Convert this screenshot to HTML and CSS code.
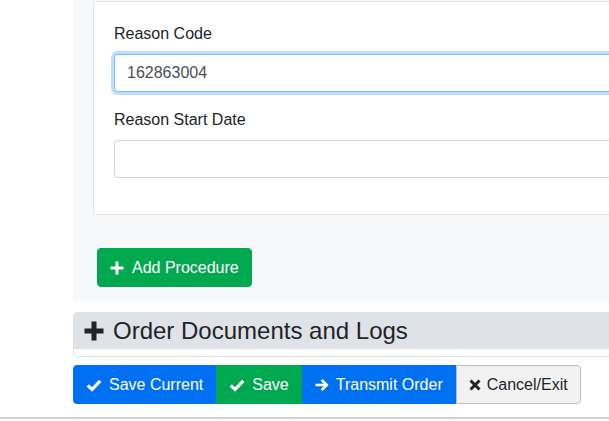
FILE: index.html
```html
<!DOCTYPE html>
<html lang="en">
<head>
<meta charset="utf-8">
<title>Order</title>
<link rel="stylesheet" href="styles.css">
</head>
<body>
<div class="page">
  <div class="main">
    <section class="panel">
      <div class="card">
        <div class="form-group">
          <label class="label">Reason Code</label>
          <input class="input focused" type="text" value="162863004">
        </div>
        <div class="form-group">
          <label class="label">Reason Start Date</label>
          <input class="input" type="text" value="">
        </div>
      </div>
      <button class="btn btn-success add-btn">
        <svg class="ico ico-plus" viewBox="0 0 14 14"><path d="M7 0.5v13M0.5 7h13" stroke="#fff" stroke-width="3" fill="none"/></svg>
        <span>Add Procedure</span>
      </button>
    </section>

    <section class="docs">
      <div class="docs-header">
        <svg class="big-plus" viewBox="0 0 20 20"><path d="M10 0.5v19M0.5 10h19" stroke="#212529" stroke-width="5" fill="none"/></svg>
        <span>Order Documents and Logs</span>
      </div>
      <div class="docs-body"></div>
    </section>

    <div class="actions">
      <button class="btn btn-primary first">
        <svg class="ico ico-check" viewBox="0 0 16 16"><path d="M1.8 8.3l4.2 4.2 8.2-8.7" stroke="#fff" stroke-width="3.2" fill="none" stroke-linejoin="miter"/></svg>
        <span>Save Current</span>
      </button>
      <button class="btn btn-success">
        <svg class="ico ico-check" viewBox="0 0 16 16"><path d="M1.8 8.3l4.2 4.2 8.2-8.7" stroke="#fff" stroke-width="3.2" fill="none" stroke-linejoin="miter"/></svg>
        <span>Save</span>
      </button>
      <button class="btn btn-primary">
        <svg class="ico ico-arrow" viewBox="0 0 14 14"><path d="M0.5 7h11.5M6.6 1.8l5.2 5.2-5.2 5.2" stroke="#fff" stroke-width="2.6" fill="none"/></svg>
        <span>Transmit Order</span>
      </button>
      <button class="btn btn-light last">
        <svg class="ico ico-times" viewBox="0 0 12 12"><path d="M1.5 1.5l9 9M10.5 1.5l-9 9" stroke="#212529" stroke-width="3" fill="none"/></svg>
        <span>Cancel/Exit</span>
      </button>
    </div>
  </div>
  <div class="footer-line"></div>
</div>
</body>
</html>
```

FILE: styles.css
```css
html, body {
  margin: 0;
  padding: 0;
  background: #fff;
  overflow: hidden;
}
body {
  font-family: "Liberation Sans", Arial, sans-serif;
  font-size: 16px;
  line-height: 1.5;
  color: #212529;
}
.page {
  width: 609px;
  height: 421px;
  overflow: hidden;
}
.main {
  margin-left: 73px;
  width: 700px;
}
.panel {
  background: #f7f8fa;
  padding: 1px 0 14px 20px;
}
.card {
  background: #fff;
  border: 1px solid #dfe2e6;
  border-radius: 4px;
  padding: 20px;
}
.form-group {
  margin-bottom: 16px;
}
.label {
  display: block;
  margin-bottom: 8px;
}
.input {
  display: block;
  box-sizing: border-box;
  width: 100%;
  height: 38px;
  padding: 6px 12px;
  font-family: inherit;
  font-size: 16px;
  line-height: 24px;
  color: #495057;
  background: #fff;
  border: 1px solid #ced4da;
  border-radius: 4px;
  outline: none;
}
.input.focused {
  border-color: #80bdff;
  box-shadow: 0 0 0 3px rgba(0, 123, 255, 0.25);
}
.btn {
  display: inline-flex;
  align-items: center;
  box-sizing: border-box;
  height: 39px;
  padding: 6px 12px;
  font-family: inherit;
  font-size: 16px;
  line-height: 24px;
  white-space: nowrap;
  border: 1px solid transparent;
  border-radius: 0;
  color: #fff;
  cursor: pointer;
}
.ico {
  flex: none;
}
.ico-check {
  width: 16px;
  height: 16px;
  margin-right: 7px;
}
.ico-plus {
  width: 14px;
  height: 14px;
  margin-right: 8px;
}
.ico-arrow {
  width: 14px;
  height: 14px;
  margin-right: 7px;
}
.ico-times {
  width: 12px;
  height: 12px;
  margin-right: 6px;
}
.btn-success {
  background: #00a84f;
  border-color: #00a84f;
}
.btn-primary {
  background: #0070f3;
  border-color: #0070f3;
}
.btn-light {
  background: #f2f2f2;
  border-color: #b8bcc2;
  color: #212529;
}
.add-btn {
  margin: 33px 0 0 4px;
  border-radius: 4px;
}
.docs {
  margin-top: 11px;
  border: 1px solid #dfe2e6;
  border-radius: 4px;
}
.docs-header {
  display: flex;
  align-items: center;
  gap: 9px;
  height: 36px;
  padding-left: 10px;
  background: #dfe2e6;
  font-size: 24px;
  line-height: 36px;
}
.big-plus {
  width: 20px;
  height: 20px;
  flex: none;
}
.docs-body {
  height: 7px;
}
.actions {
  display: flex;
  margin-top: 8px;
}
.actions .first {
  border-radius: 4px 0 0 4px;
}
.actions .last {
  border-radius: 0 4px 4px 0;
}
.footer-line {
  margin-top: 13px;
  border-top: 2px solid #d0d0d0;
}
```
